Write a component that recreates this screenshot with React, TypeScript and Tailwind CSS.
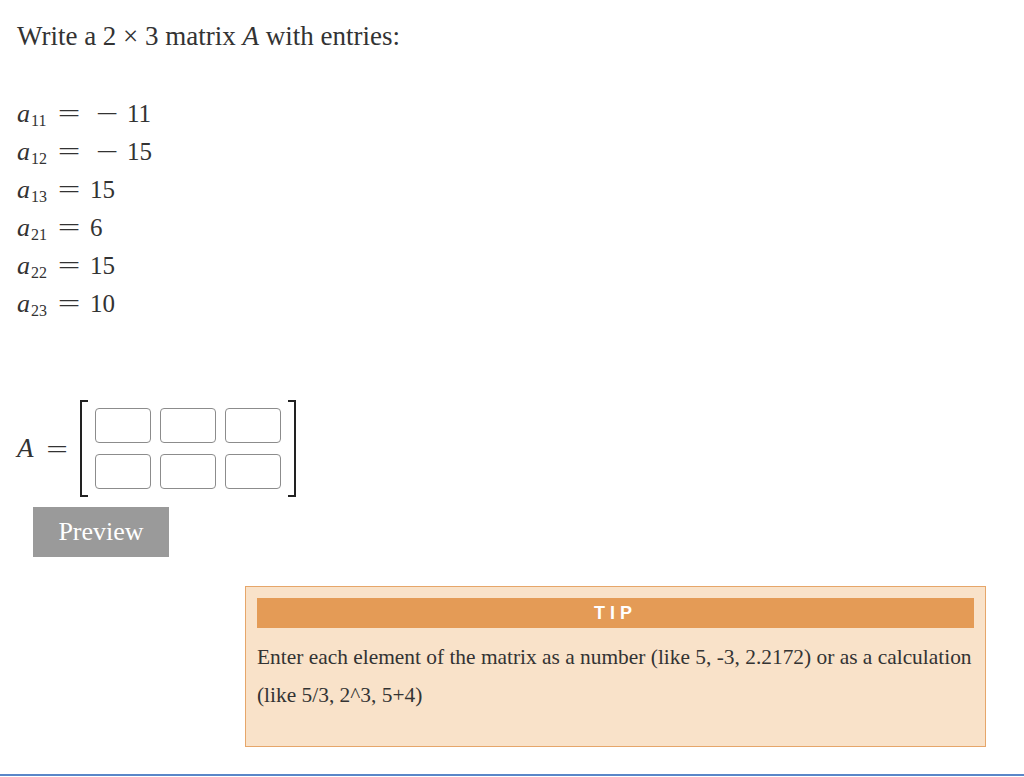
import React from 'react';

interface Entry {
    sub: string;
    neg?: boolean;
    value: string;
}

const entries: Entry[] = [
    { sub: '11', neg: true, value: '11' },
    { sub: '12', neg: true, value: '15' },
    { sub: '13', value: '15' },
    { sub: '21', value: '6' },
    { sub: '22', value: '15' },
    { sub: '23', value: '10' },
];

// wide operator glyphs like the math renderer's
const Op: React.FC<{ ch: string; className?: string }> = ({ ch, className = '' }) => (
    <span className={`inline-block w-[20px] text-center scale-x-[1.6] ${className}`}>{ch}</span>
);

const App: React.FC = () => {
    return (
        <div
            className="h-[777px] flex flex-col bg-white text-[#333] px-[17px]"
            style={{ fontFamily: '"Liberation Serif", "Times New Roman", serif' }}
        >
            {/* Heading */}
            <div className="pt-[21px] text-[27px] leading-[31px]">
                Write a 2 × 3 matrix <i>A</i> with entries:
            </div>

            {/* Entries */}
            <div className="mt-[43px] text-[25px]">
                {entries.map(e => (
                    <div key={e.sub} className="flex items-baseline h-[38px] leading-[38px]">
                        <span className="w-[42px] whitespace-nowrap">
                            <i className="text-[26px]">a</i>
                            <span className="text-[16px] align-[-4px] ml-[1px]">{e.sub}</span>
                        </span>
                        <Op ch="=" />
                        {e.neg ? (
                            <>
                                <Op ch="−" className="ml-[18px]" />
                                <span className="ml-[10px]">{e.value}</span>
                            </>
                        ) : (
                            <span className="ml-[11px]">{e.value}</span>
                        )}
                    </div>
                ))}
            </div>

            {/* Matrix input */}
            <div className="mt-[77px] flex items-center text-[24px] leading-none">
                <i className="w-[30px] text-[27px]">A</i>
                <Op ch="=" />
                <div className="ml-[13px] flex items-center">
                    <div className="w-[8px] h-[97px] border-l-2 border-y-2 border-[#222]" />
                    <div className="mx-[7px] grid grid-cols-3 gap-x-[9px] gap-y-[11px]">
                        {[0, 1, 2, 3, 4, 5].map(i => (
                            <input
                                key={i}
                                type="text"
                                className="w-[56px] h-[35px] border border-[#8c8c8c] rounded-[4px] bg-white outline-none"
                            />
                        ))}
                    </div>
                    <div className="w-[8px] h-[97px] border-r-2 border-y-2 border-[#222]" />
                </div>
            </div>

            <button
                type="button"
                className="mt-[10px] ml-[16px] w-[136px] h-[50px] bg-[#9a9a9a] text-white text-[26px] leading-none"
            >
                Preview
            </button>

            {/* Tip */}
            <div className="mt-[29px] ml-[228px] w-[741px] h-[161px] border border-[#e6a66a] bg-[#f9e2c9] p-[11px]">
                <div
                    className="h-[30px] bg-[#e49b56] text-white text-[18px] font-bold tracking-[5px] flex items-center justify-center"
                    style={{ fontFamily: '"Liberation Sans", Arial, sans-serif' }}
                >
                    TIP
                </div>
                <p className="mt-[10px] text-[21.4px] leading-[38px]">
                    Enter each element of the matrix as a number (like 5, -3, 2.2172) or as a calculation
                    <br />
                    (like 5/3, 2^3, 5+4)
                </p>
            </div>

            <div className="mt-auto mb-[1px] -mx-[17px] h-[2px] bg-[#5a86c8]" />
        </div>
    );
};

export default App;
